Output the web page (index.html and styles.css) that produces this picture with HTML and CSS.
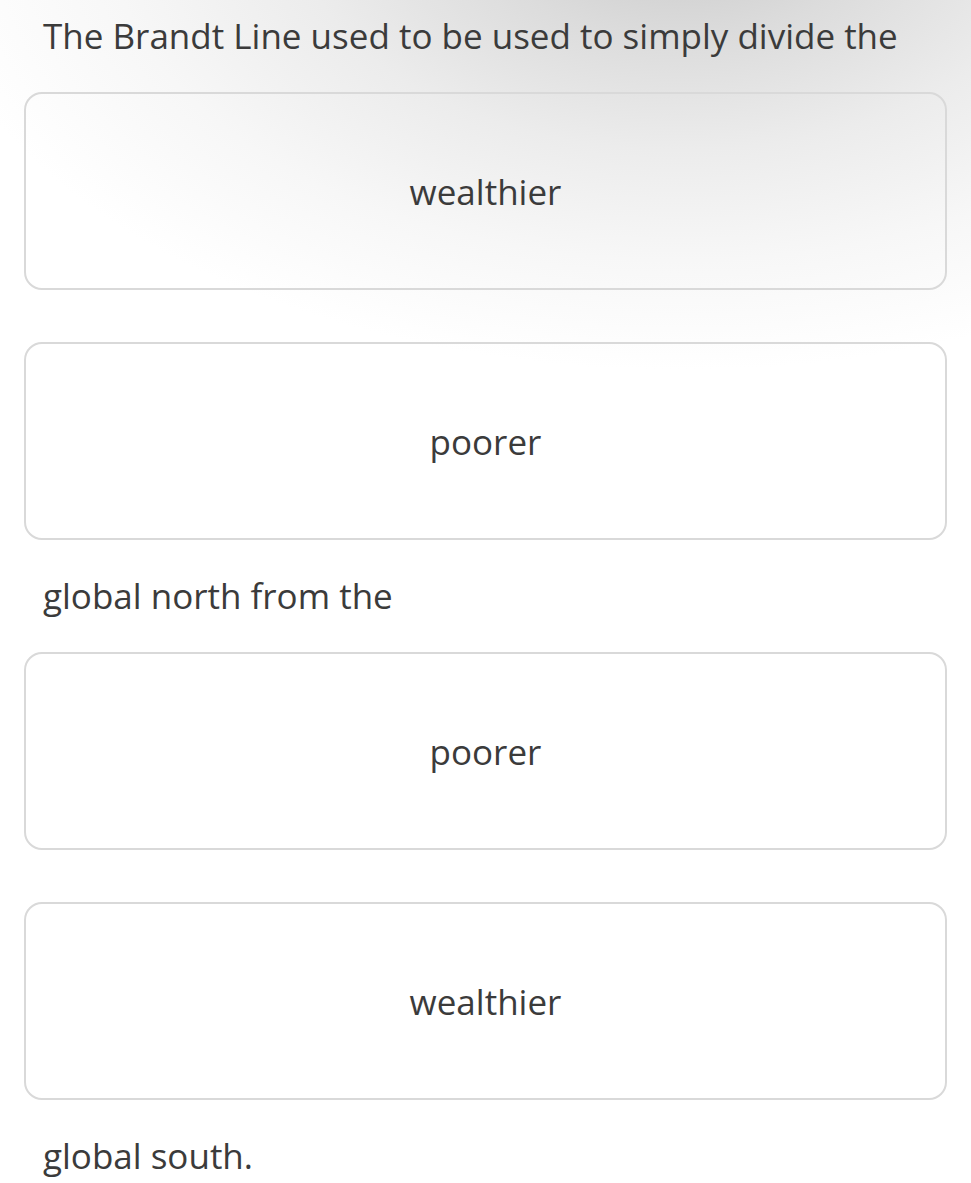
FILE: index.html
```html
<!DOCTYPE html>
<html lang="en">
  <head>
    <meta charset="UTF-8" />
    <meta name="viewport" content="width=device-width, initial-scale=1.0" />
    <title>Brandt Line</title>
    <link rel="stylesheet" href="styles.css">
  </head>

  <body>
    <div class="question">
      <p class="prompt">The Brandt Line used to be used to simply divide the</p>
      <div class="choices">
        <button class="choice">wealthier</button>
        <button class="choice">poorer</button>
      </div>
      <p class="prompt">global north from the</p>
      <div class="choices">
        <button class="choice">poorer</button>
        <button class="choice">wealthier</button>
      </div>
      <p class="prompt">global south.</p>
    </div>
  </body>
</html>
```

FILE: styles.css
```css
html,
body {
  margin: 0;
  height: 100%;
}

body {
  font-family: "Open Sans", "Liberation Sans", sans-serif;
  color: #3b3b3b;
  background: radial-gradient(
    ellipse 760px 440px at 680px -70px,
    #c9c9c9 0%,
    #dcdcdc 25%,
    #ececec 50%,
    #f7f7f7 75%,
    #ffffff 100%
  );
  background-repeat: no-repeat;
  background-color: #fff;
}

.question {
  display: flex;
  flex-direction: column;
  gap: 32px;
  padding: 12px 24px 0;
}

.prompt {
  margin: 0;
  padding-left: 19px;
  font-size: 35px;
  line-height: 48px;
}

.choices {
  display: flex;
  flex-direction: column;
  gap: 52px;
}

.choice {
  height: 198px;
  border: 2px solid #d9d9d9;
  border-radius: 18px;
  background: transparent;
  font-family: inherit;
  font-size: 35px;
  color: #3b3b3b;
  cursor: pointer;
}
```
